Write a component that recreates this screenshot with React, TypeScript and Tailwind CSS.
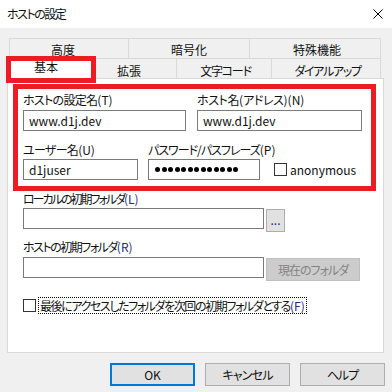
import React from "react";

const Mn = ({ children }: { children: React.ReactNode }) => (
  <span className="text-[#1f2a7a] tracking-[0px]">{children}</span>
);

export default function App() {
  const dots = Array.from({ length: 13 });
  return (
    <div className="w-[392px] h-[392px] bg-[#f0f0f0] font-['Noto_Sans_CJK_JP','Noto_Sans',sans-serif] text-[12px] leading-[16px] text-[#111111] [font-feature-settings:'palt'] overflow-hidden flex flex-col">
      {/* title bar */}
      <div className="h-[28px] bg-white flex items-center justify-between pl-[7px] pr-[9px] shrink-0">
        <span className="tracking-[-1.5px]">ホストの設定</span>
        <svg width="10" height="10" viewBox="0 0 10 10">
          <path d="M0.5 0.5L9.5 9.5M9.5 0.5L0.5 9.5" stroke="#000" strokeWidth="1" />
        </svg>
      </div>

      <div className="pt-[10px] px-[7px] flex flex-col">
        {/* tabs */}
        <div className="ml-[2px] w-[372px]">
          <div className="flex h-[20px]">
            <div className="w-[120px] border-t border-l border-r border-[#d9d9d9] flex justify-center pt-[3px] pr-[12px]">高度</div>
            <div className="w-[121px] border-t border-r border-[#d9d9d9] flex justify-center pt-[3px]">暗号化</div>
            <div className="w-[131px] border-t border-r border-[#d9d9d9] flex justify-center pt-[3px] pl-[4px]">特殊機能</div>
          </div>
          <div className="flex h-[20px] border-t border-[#d9d9d9] box-content">
            <div className="relative w-[86px] h-[21px] -mt-[2px] bg-white z-10 flex justify-center pt-[2px] pr-[12px]">
              基本
              <div className="absolute left-[-3px] top-[-1px] w-[90px] h-[27px] border-[5px] border-[#ed1c24]" />
            </div>
            <div className="w-[82px] border-r border-[#d9d9d9] flex justify-center pt-[4px] pr-[13px]">拡張</div>
            <div className="w-[95px] border-r border-[#d9d9d9] flex justify-center pt-[4px] pl-[3px] tracking-[-1.2px]">文字コード</div>
            <div className="w-[109px] border-r border-[#d9d9d9] flex justify-center pt-[4px] pl-[3px] tracking-[-1.3px]">ダイアルアップ</div>
          </div>
        </div>

        {/* panel */}
        <div className="w-[377px] h-[275px] -mt-[1px] border border-[#d9d9d9] bg-white flex flex-col">
          {/* red annotated group */}
          <div className="ml-[5px] mt-[5px] w-[363px] h-[107px] border-[5px] border-[#ed1c24] pl-[5px] flex flex-col">
            <div className="h-[21px] flex items-center">
              <span className="w-[174px]"><span className="tracking-[-0.7px]">ホストの設定名</span>(T)</span>
              <span><span className="tracking-[-0.4px]">ホスト名</span>(<span className="tracking-[-0.4px]">アドレス</span>)(N)</span>
            </div>
            <div className="h-[21px] flex">
              <div className="w-[163px] h-[21px] border border-[#7a7a7a] flex items-center pl-[5px]">www.d1j.dev</div>
              <div className="ml-[11px] w-[165px] h-[21px] border border-[#7a7a7a] flex items-center pl-[5px]">www.d1j.dev</div>
            </div>
            <div className="h-[28px] flex items-end pb-[1px]">
              <span className="w-[125px]"><span className="tracking-[-0.7px]">ユーザー名</span>(U)</span>
              <span><span className="tracking-[-1px]">パスワード/パスフレーズ</span>(P)</span>
            </div>
            <div className="h-[21px] flex items-center">
              <div className="w-[115px] h-[21px] border border-[#7a7a7a] flex items-center pl-[5px]">d1juser</div>
              <div className="ml-[10px] w-[112px] h-[21px] border border-[#7a7a7a] flex items-center pl-[6px] gap-[1.5px]">
                {dots.map((_, i) => (
                  <span key={i} className="inline-block w-[5px] h-[5px] rounded-full bg-black" />
                ))}
              </div>
              <div className="ml-[14px] w-[13px] h-[13px] border border-[#333333] bg-white" />
              <span className="ml-[3px]">anonymous</span>
            </div>
          </div>

          {/* folders */}
          <div className="pl-[15px] flex flex-col">
            <div className="h-[17px]">
              <span className="tracking-[-2px]">ローカルの初期フォルダ</span><Mn>(L)</Mn>
            </div>
            <div className="h-[31px] flex items-start">
              <div className="w-[241px] h-[21px] border border-[#7a7a7a]" />
              <div className="ml-[2px] mt-[1px] w-[19px] h-[23px] border border-[#adadad] bg-[#e1e1e1] flex items-center justify-center text-[#1f2a7a] leading-none pb-[2px]">
                ...
              </div>
            </div>
            <div className="h-[18px]">
              <span className="tracking-[-1.5px]">ホストの初期フォルダ</span><Mn>(R)</Mn>
            </div>
            <div className="h-[40px] flex items-start">
              <div className="w-[241px] h-[21px] border border-[#7a7a7a]" />
              <div className="ml-[2px] mt-[1px] w-[94px] h-[23px] border border-[#bfbfbf] bg-[#cccccc] text-[#838383] flex items-center justify-center tracking-[-1px]">
                現在のフォルダ
              </div>
            </div>
            <div className="h-[17px] flex items-center">
              <div className="w-[13px] h-[13px] border border-[#333333] bg-white" />
              <span className="ml-[2px] border border-dotted border-black leading-[15px] px-[1px]">
                <span className="tracking-[-1.4px]">最後にアクセスしたフォルダを次回の初期フォルダとする</span><Mn>(F)</Mn>
              </span>
            </div>
          </div>
        </div>

        {/* buttons */}
        <div className="mt-[10px] flex justify-end gap-[10px]">
          <div className="w-[85px] h-[23px] border-2 border-[#0078d7] bg-[#e1e1e1] flex items-center justify-center">OK</div>
          <div className="w-[85px] h-[23px] border border-[#adadad] bg-[#e1e1e1] flex items-center justify-center tracking-[-0.8px]">キャンセル</div>
          <div className="w-[85px] h-[23px] border border-[#adadad] bg-[#e1e1e1] flex items-center justify-center tracking-[-1px]">ヘルプ</div>
        </div>
      </div>
    </div>
  );
}
